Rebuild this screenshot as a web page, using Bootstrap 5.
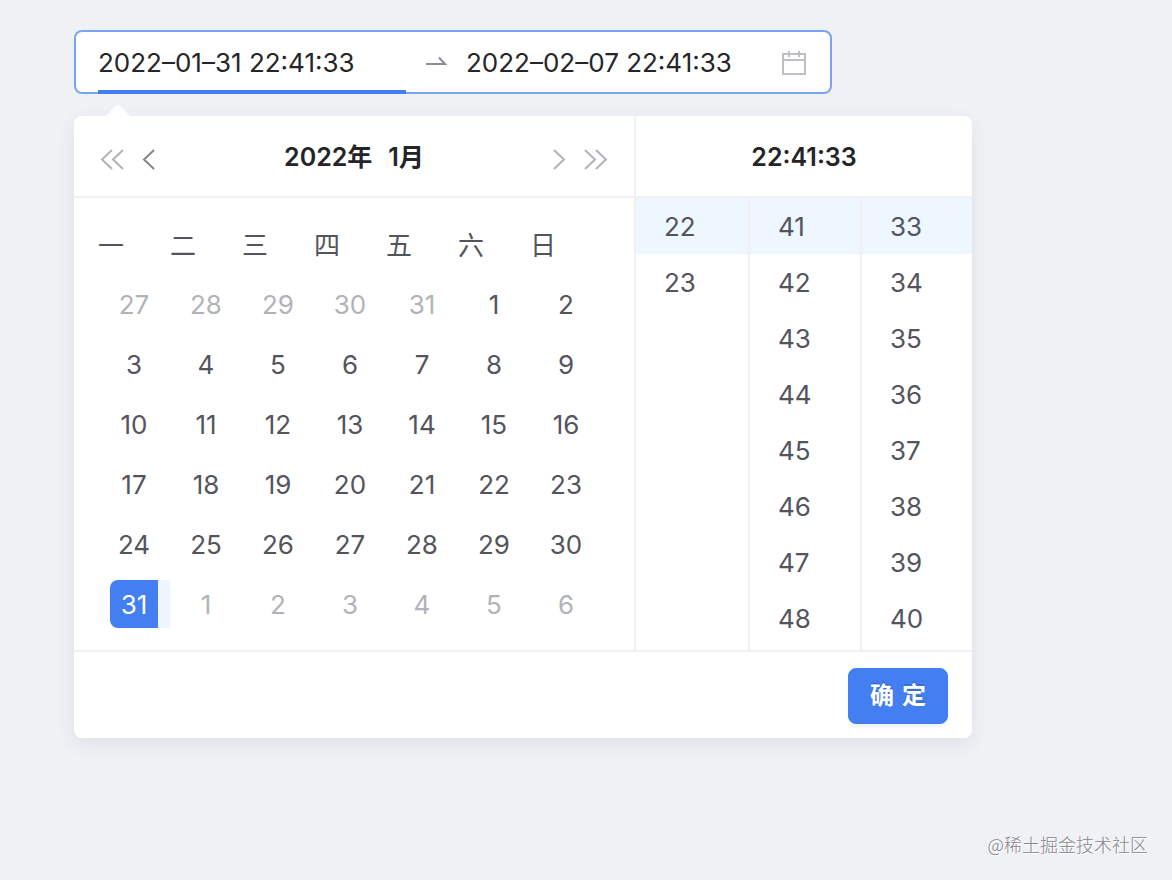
<!DOCTYPE html>
<html lang="zh-CN">
<head>
<meta charset="utf-8">
<meta name="viewport" content="width=device-width, initial-scale=1">
<title>日期时间范围选择</title>
<link href="https://cdn.jsdelivr.net/npm/bootstrap@5.3.0/dist/css/bootstrap.min.css" rel="stylesheet">
<style>
  :root { --line: #f0f0f1; --primary: #437ff0; --ink: #252528; --body: #54545c; --mute: #b2b3b8; --tint: #eef6ff; }
  body { background: #eff1f5; color: var(--body); font-family: Inter, "Noto Sans CJK SC", sans-serif; font-size: 26px; line-height: 40px; }
  button { color: inherit; }
  .page { padding: 30px 24px 14px 74px; }
  .range-field { max-width: 758px; height: 64px; border: 2px solid #78a5f3; border-radius: 8px; padding: 0 22px; }
  .range-input { flex: 1 1 0; min-width: 0; height: 64px; margin: -2px 0; border: 0; border-bottom: 4px solid transparent; padding: 4px 0 0; background: none; color: var(--ink); outline: 0; }
  .range-input.current { border-bottom-color: var(--primary); }
  .range-arrow { width: 60px; }
  .range-icon { width: 34px; padding: 2px 2px 0 0; }
  .picker { max-width: 898px; margin-top: 22px; border-radius: 8px; box-shadow: 0 6px 18px rgba(60, 65, 80, .09); }
  .picker::before { content: ""; position: absolute; left: 34px; top: -8px; width: 20px; height: 20px; background: #fff; border-radius: 3px; transform: rotate(45deg); }
  .date-side { flex: 560 1 0; min-width: 0; }
  .time-side { flex: 336 1 0; min-width: 0; border-left: 2px solid var(--line); }
  .picker-head { height: 82px; border-bottom: 2px solid var(--line); color: var(--ink); font-weight: 600; font-size: 25px; padding: 2px 24px 0; }
  .nav-btn { border: 0; padding: 4px 0 0; background: none; color: var(--mute); line-height: 0; }
  .nav-btn.strong { color: #85868a; }
  .calendar { padding: 16px 30px 16px 24px; }
  .calendar table { width: 100%; max-width: 504px; table-layout: fixed; }
  .calendar th { height: 60px; padding: 4px 0 0; font-weight: 400; text-align: left; }
  .calendar td { height: 60px; padding: 0; text-align: center; }
  .calendar .out { color: var(--mute); }
  .day { width: 48px; height: 48px; border: 0; border-radius: 8px; padding: 2px 0 0; background: none; line-height: 46px; vertical-align: middle; }
  .calendar .edge { background: linear-gradient(var(--tint), var(--tint)) right center / 50% 48px no-repeat; }
  .edge .day { background: var(--primary); color: #fff; border-radius: 8px 0 0 8px; }
  .time-list { width: calc(100% / 3); height: 452px; overflow: hidden; }
  .time-list + .time-list { border-left: 2px solid var(--line); }
  .time-list button { display: block; width: 100%; height: 56px; border: 0; background: none; padding: 2px 0 0 28px; text-align: left; }
  .time-list .chosen { background: var(--tint); }
  .picker-foot { height: 88px; border-top: 2px solid var(--line); padding: 2px 24px 0; }
  .btn-ok { --bs-btn-bg: #437ff0; --bs-btn-border-color: #437ff0; width: 100px; height: 56px; border-radius: 8px; padding: 0; font-size: 24px; font-weight: 700; box-shadow: 0 4px 2px rgba(0, 60, 100, .05); text-shadow: 0 -2px 0 rgba(0, 0, 0, .12); }
  .credit { font-size: 18px; line-height: 44px; color: #85868a; text-shadow: 1px 1px 0 #fff; font-family: "Noto Sans CJK SC", sans-serif; font-weight: 300; }
</style>
</head>
<body>
<div class="page min-vh-100 d-flex flex-column">
  <main>
    <div class="range-field bg-white d-flex align-items-center">
      <input class="range-input current" type="text" value="2022–01–31 22:41:33" aria-label="开始时间">
      <span class="range-arrow d-flex justify-content-center">
        <svg width="22" height="14" viewBox="0 0 22 14" fill="none" stroke="#8d8a9f" stroke-width="2" aria-hidden="true"><path d="M1 9H20L14 2.500"/></svg>
      </span>
      <input class="range-input" type="text" value="2022–02–07 22:41:33" aria-label="结束时间">
      <span class="range-icon d-flex justify-content-end">
        <svg width="24" height="26" viewBox="0 0 24 26" fill="none" stroke="#bfbfc5" stroke-width="2" aria-hidden="true"><path d="M1 4H23V24H1ZM1 10H23M7 1V7M17 1V7"/></svg>
      </span>
    </div>

    <section class="picker bg-white position-relative" aria-label="选择日期时间">
      <div class="d-flex">
        <div class="date-side">
          <div class="picker-head d-flex align-items-center justify-content-between">
            <div class="d-flex gap-3">
              <button class="nav-btn" type="button" aria-label="上一年"><svg width="28" height="22" viewBox="0 0 28 22" fill="none" stroke="currentColor" stroke-width="2"><path d="M14 2L4 11.500L14 21M25 2L15 11.500L25 21"/></svg></button>
              <button class="nav-btn strong" type="button" aria-label="上个月"><svg width="14" height="22" viewBox="0 0 14 22" fill="none" stroke="currentColor" stroke-width="2"><path d="M12 2L2 11.500L12 21"/></svg></button>
            </div>
            <div class="d-flex gap-3"><span>2022年</span><span>1月</span></div>
            <div class="d-flex gap-3">
              <button class="nav-btn" type="button" aria-label="下个月"><svg width="14" height="22" viewBox="0 0 14 22" fill="none" stroke="currentColor" stroke-width="2"><path d="M2 2L12 11.500L2 21"/></svg></button>
              <button class="nav-btn" type="button" aria-label="下一年"><svg width="28" height="22" viewBox="0 0 28 22" fill="none" stroke="currentColor" stroke-width="2"><path d="M3 2L13 11.500L3 21M14 2L24 11.500L14 21"/></svg></button>
            </div>
          </div>
          <div class="calendar">
            <table>
              <thead><tr><th scope="col">一</th><th scope="col">二</th><th scope="col">三</th><th scope="col">四</th><th scope="col">五</th><th scope="col">六</th><th scope="col">日</th></tr></thead>
              <tbody>
                <tr><td class="out"><button class="day">27</button></td><td class="out"><button class="day">28</button></td><td class="out"><button class="day">29</button></td><td class="out"><button class="day">30</button></td><td class="out"><button class="day">31</button></td><td><button class="day">1</button></td><td><button class="day">2</button></td></tr>
                <tr><td><button class="day">3</button></td><td><button class="day">4</button></td><td><button class="day">5</button></td><td><button class="day">6</button></td><td><button class="day">7</button></td><td><button class="day">8</button></td><td><button class="day">9</button></td></tr>
                <tr><td><button class="day">10</button></td><td><button class="day">11</button></td><td><button class="day">12</button></td><td><button class="day">13</button></td><td><button class="day">14</button></td><td><button class="day">15</button></td><td><button class="day">16</button></td></tr>
                <tr><td><button class="day">17</button></td><td><button class="day">18</button></td><td><button class="day">19</button></td><td><button class="day">20</button></td><td><button class="day">21</button></td><td><button class="day">22</button></td><td><button class="day">23</button></td></tr>
                <tr><td><button class="day">24</button></td><td><button class="day">25</button></td><td><button class="day">26</button></td><td><button class="day">27</button></td><td><button class="day">28</button></td><td><button class="day">29</button></td><td><button class="day">30</button></td></tr>
                <tr><td class="edge"><button class="day">31</button></td><td class="out"><button class="day">1</button></td><td class="out"><button class="day">2</button></td><td class="out"><button class="day">3</button></td><td class="out"><button class="day">4</button></td><td class="out"><button class="day">5</button></td><td class="out"><button class="day">6</button></td></tr>
              </tbody>
            </table>
          </div>
        </div>
        <div class="time-side">
          <div class="picker-head d-flex align-items-center justify-content-center">22:41:33</div>
          <div class="d-flex">
            <div class="time-list" role="group" aria-label="时"><button class="chosen">22</button><button>23</button></div>
            <div class="time-list" role="group" aria-label="分"><button class="chosen">41</button><button>42</button><button>43</button><button>44</button><button>45</button><button>46</button><button>47</button><button>48</button></div>
            <div class="time-list" role="group" aria-label="秒"><button class="chosen">33</button><button>34</button><button>35</button><button>36</button><button>37</button><button>38</button><button>39</button><button>40</button></div>
          </div>
        </div>
      </div>
      <div class="picker-foot d-flex align-items-center justify-content-end">
        <button class="btn btn-primary btn-ok d-flex align-items-center justify-content-center gap-2" type="button"><span>确</span> <span>定</span></button>
      </div>
    </section>
  </main>
  <footer class="credit mt-auto text-end">@稀土掘金技术社区</footer>
</div>
<script src="https://cdn.jsdelivr.net/npm/bootstrap@5.3.0/dist/js/bootstrap.bundle.min.js"></script>
</body>
</html>
